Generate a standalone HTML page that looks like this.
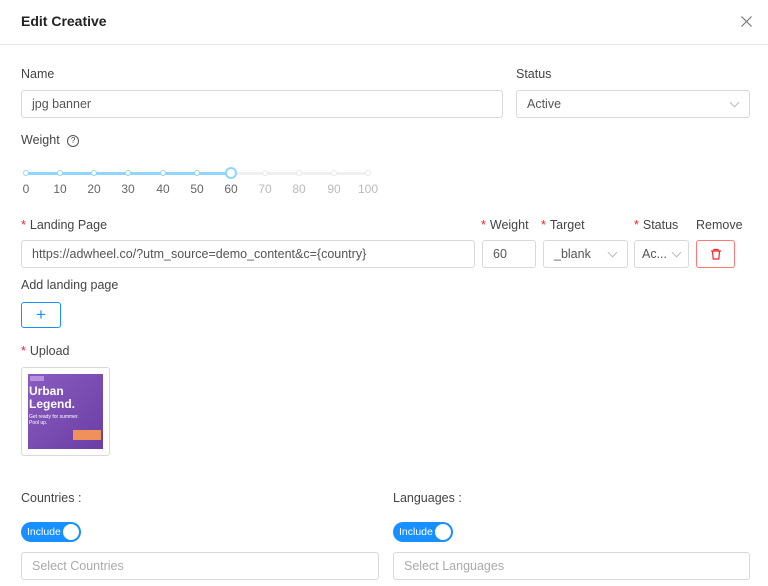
<!DOCTYPE html><html><head><style>
body{margin:0;width:768px;height:586px;background:#fff;font-family:"Liberation Sans",sans-serif;color:#444;font-size:12.5px;position:relative;overflow:hidden}
.a{position:absolute}
.inp{position:absolute;border:1px solid #d9d9d9;border-radius:3px;box-sizing:border-box;line-height:27px;padding-left:10px;color:#555}
.r{color:#f5222d;margin-right:4px}
.chev{position:absolute;right:11px;top:8px;width:6px;height:6px;border-right:1px solid #bbb;border-bottom:1px solid #bbb;transform:rotate(45deg)}
.dot{position:absolute;width:6px;height:6px;border-radius:50%;background:#fff;top:170px;box-sizing:border-box}
.lb{position:absolute;top:182px;font-size:12px;color:#666;width:30px;text-align:center}
.tg{position:absolute;width:60px;height:20px;border-radius:10px;background:#1890ff;color:#fff;font-size:10.5px;line-height:20px}
.tg span{position:absolute;left:6px}
.tg i{position:absolute;right:2px;top:2px;width:16px;height:16px;border-radius:50%;background:#fff}
</style></head><body>
<div class="a" style="left:21px;top:13px;font-size:14px;font-weight:bold;color:#222">Edit Creative</div>
<svg class="a" style="left:741px;top:16px" width="11" height="11" viewBox="0 0 11 11" stroke="#777" stroke-width="1.2"><path d="M0.5 0.5l10 10M10.5 0.5l-10 10"/></svg>
<div class="a" style="left:0;top:44px;width:768px;height:1px;background:#e8e8e8"></div>
<div class="a" style="left:21px;top:67px">Name</div>
<div class="a" style="left:516px;top:67px">Status</div>
<div class="inp" style="left:21px;top:90px;width:482px;height:28px">jpg banner</div>
<div class="inp" style="left:516px;top:90px;width:234px;height:28px">Active<div class="chev"></div></div>
<div class="a" style="left:21px;top:133px">Weight <span style="display:inline-block;width:10px;height:10px;border:1.2px solid #555;border-radius:50%;font-size:8px;text-align:center;line-height:10px;margin-left:4px;vertical-align:1px">?</span></div>
<div class="a" style="left:26px;top:172px;width:205px;height:3px;background:#91d5ff"></div>
<div class="a" style="left:231px;top:172px;width:137px;height:3px;background:#f0f0f0"></div>
<div class="dot" style="left:23px;border:1.5px solid #91d5ff"></div>
<div class="dot" style="left:57px;border:1.5px solid #91d5ff"></div>
<div class="dot" style="left:91px;border:1.5px solid #91d5ff"></div>
<div class="dot" style="left:125px;border:1.5px solid #91d5ff"></div>
<div class="dot" style="left:160px;border:1.5px solid #91d5ff"></div>
<div class="dot" style="left:194px;border:1.5px solid #91d5ff"></div>
<div class="dot" style="left:225px;top:167px;width:12px;height:12px;border:2px solid #91d5ff"></div>
<div class="dot" style="left:262px;border:1.5px solid #e8e8e8"></div>
<div class="dot" style="left:296px;border:1.5px solid #e8e8e8"></div>
<div class="dot" style="left:331px;border:1.5px solid #e8e8e8"></div>
<div class="dot" style="left:365px;border:1.5px solid #e8e8e8"></div>
<div class="lb" style="left:11px">0</div><div class="lb" style="left:45px">10</div><div class="lb" style="left:79px">20</div><div class="lb" style="left:113px">30</div><div class="lb" style="left:148px">40</div><div class="lb" style="left:182px">50</div><div class="lb" style="left:216px">60</div>
<div class="lb" style="left:250px;color:#bbb">70</div><div class="lb" style="left:284px;color:#bbb">80</div><div class="lb" style="left:319px;color:#bbb">90</div><div class="lb" style="left:353px;color:#bbb">100</div>
<div class="a" style="left:21px;top:218px"><span class="r">*</span>Landing Page</div>
<div class="a" style="left:481px;top:218px"><span class="r">*</span>Weight</div>
<div class="a" style="left:541px;top:218px"><span class="r">*</span>Target</div>
<div class="a" style="left:634px;top:218px"><span class="r">*</span>Status</div>
<div class="a" style="left:696px;top:218px">Remove</div>
<div class="inp" style="left:21px;top:240px;width:454px;height:28px">https://adwheel.co/?utm_source=demo_content&amp;c={country}</div>
<div class="inp" style="left:482px;top:240px;width:54px;height:28px">60</div>
<div class="inp" style="left:543px;top:240px;width:85px;height:28px">_blank<div class="chev"></div></div>
<div class="inp" style="left:634px;top:240px;width:55px;height:28px;padding-left:7px">Ac...<div class="chev" style="right:8px"></div></div>
<div class="a" style="left:696px;top:240px;width:39px;height:28px;border:1px solid #ff7875;border-radius:3px;box-sizing:border-box">
<svg width="12" height="12" viewBox="0 0 12 12" style="position:absolute;left:13px;top:7px" fill="none" stroke="#f5222d" stroke-width="1.2"><path d="M1 3h10M4 3V1.5h4V3M2.5 3l.7 8h5.6l.7-8"/></svg></div>
<div class="a" style="left:21px;top:278px">Add landing page</div>
<div class="a" style="left:21px;top:302px;width:40px;height:26px;border:1px solid #1890ff;border-radius:3px;box-sizing:border-box;color:#1890ff;text-align:center;line-height:23px;font-size:17px">+</div>
<div class="a" style="left:21px;top:344px"><span class="r">*</span>Upload</div>
<div class="a" style="left:21px;top:367px;width:89px;height:89px;border:1px solid #d9d9d9;border-radius:3px;box-sizing:border-box"></div>
<div class="a" style="left:28px;top:374px;width:75px;height:75px;background:linear-gradient(135deg,#8a5cc0,#6a3ea5);color:#fff">
<div class="a" style="left:2px;top:2px;width:14px;height:5px;background:#b692e0;font-size:3px"></div>
<div class="a" style="left:1px;top:11px;font-size:12px;font-weight:bold;line-height:13px">Urban<br>Legend.</div>
<div class="a" style="left:1px;top:40px;font-size:5px;line-height:6px">Get ready for summer.<br>Pool up.</div>
<div class="a" style="left:45px;top:56px;width:28px;height:10px;background:#f0905a"></div></div>
<div class="a" style="left:21px;top:491px">Countries :</div>
<div class="a" style="left:393px;top:491px">Languages :</div>
<div class="tg" style="left:21px;top:522px"><span>Include</span><i></i></div>
<div class="tg" style="left:393px;top:522px"><span>Include</span><i></i></div>
<div class="inp" style="left:21px;top:552px;width:358px;height:28px;color:#aaa">Select Countries</div>
<div class="inp" style="left:393px;top:552px;width:357px;height:28px;color:#aaa">Select Languages</div>
</body></html>
